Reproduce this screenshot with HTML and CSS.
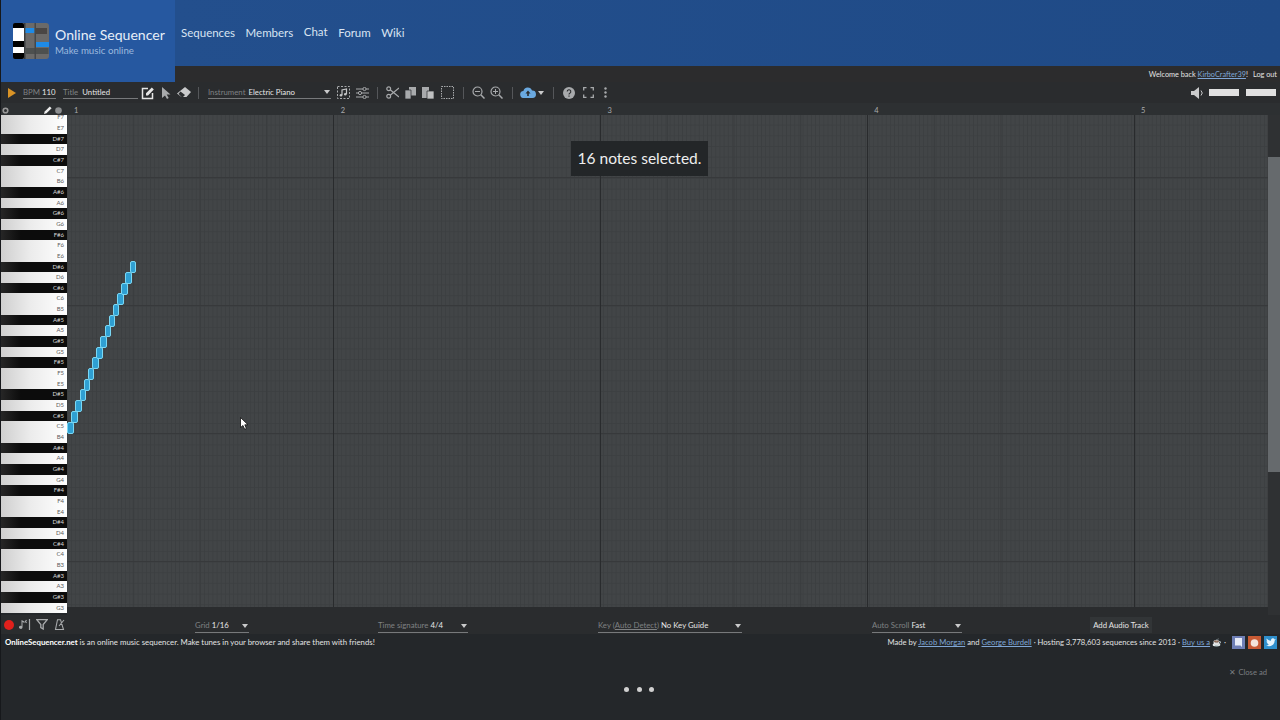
FILE: index.html
```html
<!DOCTYPE html>
<html lang="en">
<head>
  <meta charset="UTF-8"/>
  <title>Online Sequencer</title>
  <link rel="stylesheet" href="styles.css">
</head>
<body>

  <header class="top">
    <a class="brand">
      <svg class="logo" width="36" height="36" viewBox="0 0 36 36">
        <rect width="36" height="36" rx="3" fill="#6b6a69"/>
        <rect width="11" height="36" rx="2" fill="#000"/>
        <rect y="5" width="11" height="13" fill="#fff"/>
        <rect y="24" width="11" height="6" fill="#fff"/>
        <rect x="11" width="1.5" height="36" fill="#3a3d3f"/>
        <rect x="12.5" y="5" width="9" height="5" fill="#1f8be6"/>
        <rect x="23" y="19" width="13" height="5" fill="#1f8be6"/>
        <rect x="23" y="5" width="11" height="6" fill="#4a4644"/>
        <rect x="12.5" y="25" width="23" height="6" fill="#4d504f"/>
        <rect x="21.5" width="1.5" height="36" fill="#454749"/>
      </svg>
      <div>
        <div class="brand-name">Online Sequencer</div>
        <div class="brand-sub">Make music online</div>
      </div>
    </a>
    <div class="top-right">
      <nav class="nav">
        <a>Sequences</a>
        <a>Members</a>
        <a class="nav-chat">Chat</a>
        <a>Forum</a>
        <a>Wiki</a>
      </nav>
      <div class="userbar">
        <span>Welcome back <a class="link">KirboCrafter39</a>!</span>
        <span class="logout">Log out</span>
      </div>
    </div>
  </header>

  <div class="toolbar">
    <svg class="play" width="9" height="10" viewBox="0 0 9 10"><path d="M1 0l8 5-8 5z" fill="#d99326"/></svg>
    <div class="field field-bpm"><label>BPM</label> <b>110</b></div>
    <div class="field field-title"><label>Title</label> <b>Untitled</b></div>
    <svg class="ico ico-edit" width="14" height="14" viewBox="0 0 14 14"><path d="M7 2.500H1.500v10h10V7" fill="none" stroke="#e6e6e6" stroke-width="1.500"/><path d="M5 9.500V7.300L10.800 1.500l2 2L7 9.500z" fill="#e6e6e6"/></svg>
    <svg class="ico ico-pointer" width="10" height="12" viewBox="0 0 10 12"><path d="M1 0v11l3-2.600 2 3.600 1.700-.9-2-3.500H9.500z" fill="#a8aaac"/></svg>
    <svg class="ico ico-eraser" width="14" height="11" viewBox="0 0 14 11"><path d="M8 0l6 5-4.500 5H4.500L0 6.500z" fill="#c9cacb"/><path d="M3.500 4.500L8 8 6 10H4.500L1.500 6.800z" fill="#2a2c2e"/></svg>
    <span class="sep sep-1"></span>
    <div class="field field-instrument"><label>Instrument</label> <b>Electric Piano</b><i class="caret"></i></div>
    <svg class="ico ico-note" width="13" height="13" viewBox="0 0 13 13"><rect x=".5" y=".5" width="12" height="12" fill="none" stroke="#a8aaac" stroke-dasharray="2 1.500"/><path d="M5 9V4l4.500-1v5" fill="none" stroke="#c4c5c6" stroke-width="1.200"/><circle cx="4" cy="9.300" r="1.300" fill="#c4c5c6"/><circle cx="8.300" cy="8.300" r="1.300" fill="#c4c5c6"/></svg>
    <svg class="ico ico-sliders" width="13" height="12" viewBox="0 0 13 12"><path d="M0 2h13M0 6h13M0 10h13" stroke="#a8aaac" stroke-width="1.100"/><circle cx="8.500" cy="2" r="1.600" fill="#2a2c2e" stroke="#a8aaac"/><circle cx="4" cy="6" r="1.600" fill="#2a2c2e" stroke="#a8aaac"/><circle cx="8.500" cy="10" r="1.600" fill="#2a2c2e" stroke="#a8aaac"/></svg>
    <span class="sep sep-2"></span>
    <svg class="ico ico-cut" width="13" height="13" viewBox="0 0 13 13"><circle cx="2.700" cy="2.700" r="1.900" fill="none" stroke="#a8aaac" stroke-width="1.200"/><circle cx="2.700" cy="10.300" r="1.900" fill="none" stroke="#a8aaac" stroke-width="1.200"/><path d="M4.200 3.800L13 11M4.200 9.200L13 2" stroke="#a8aaac" stroke-width="1.200"/></svg>
    <svg class="ico ico-copy" width="11" height="12" viewBox="0 0 11 12"><path d="M4 0h7v8.500H4z" fill="#a8aaac"/><path d="M0 3h6v9H0z" fill="#a8aaac" stroke="#2a2c2e" stroke-width=".7"/></svg>
    <svg class="ico ico-paste" width="12" height="12" viewBox="0 0 12 12"><path d="M0 0h7v11H0z" fill="#a8aaac"/><path d="M5 4h7v8H5z" fill="#bfc0c1" stroke="#2a2c2e" stroke-width=".7"/></svg>
    <svg class="ico ico-select" width="13" height="13" viewBox="0 0 13 13"><rect x=".5" y=".5" width="12" height="12" fill="none" stroke="#a8aaac" stroke-dasharray="1.500 1"/></svg>
    <span class="sep sep-3"></span>
    <svg class="ico ico-zoomout" width="13" height="13" viewBox="0 0 13 13"><circle cx="5.500" cy="5.500" r="4.500" fill="none" stroke="#a8aaac" stroke-width="1.200"/><path d="M8.800 8.800L12.500 12.500" stroke="#a8aaac" stroke-width="1.500"/><path d="M3 5.500h5" stroke="#a8aaac"/></svg>
    <svg class="ico ico-zoomin" width="13" height="13" viewBox="0 0 13 13"><circle cx="5.500" cy="5.500" r="4.500" fill="none" stroke="#a8aaac" stroke-width="1.200"/><path d="M8.800 8.800L12.500 12.500" stroke="#a8aaac" stroke-width="1.500"/><path d="M3 5.500h5M5.500 3v5" stroke="#a8aaac"/></svg>
    <span class="sep sep-4"></span>
    <svg class="ico ico-cloud" width="16" height="11" viewBox="0 0 16 11"><path d="M4 11a3.500 3.500 0 0 1-.6-7A4.500 4.500 0 0 1 12 3.600 3.700 3.700 0 0 1 12.500 11z" fill="#6aa9e0"/><path d="M8 3.500L5.500 6.500H7.200V9h1.600V6.500h1.700z" fill="#2a2c2e"/></svg>
    <i class="caret caret-cloud"></i>
    <span class="sep sep-5"></span>
    <svg class="ico ico-help" width="12" height="12" viewBox="0 0 12 12"><circle cx="6" cy="6" r="6" fill="#a8aaac"/><path d="M4.200 4.600a1.800 1.800 0 1 1 2.600 1.600c-.6.300-.8.600-.8 1.200M6 8.500v1.200" fill="none" stroke="#2a2c2e" stroke-width="1.100"/></svg>
    <svg class="ico ico-full" width="11" height="11" viewBox="0 0 11 11"><path d="M.7 3.500V.7h2.800M7.500.7h2.800v2.800M10.300 7.500v2.800H7.500M3.500 10.300H.7V7.500" fill="none" stroke="#a8aaac" stroke-width="1.300"/></svg>
    <svg class="ico ico-more" width="3" height="11" viewBox="0 0 3 11"><circle cx="1.500" cy="1.500" r="1.200" fill="#a8aaac"/><circle cx="1.500" cy="5.500" r="1.200" fill="#a8aaac"/><circle cx="1.500" cy="9.500" r="1.200" fill="#a8aaac"/></svg>
    <div class="volume">
      <svg width="14" height="12" viewBox="0 0 14 12"><path d="M0 4h3l5-4v12L3 8H0z" fill="#c9cacb"/><path d="M10 3.500a3.500 3.500 0 0 1 0 5" fill="none" stroke="#c9cacb"/></svg>
      <span class="slider"></span>
      <span class="slider"></span>
    </div>
  </div>

  <div class="ruler">
    <div class="ruler-tools">
      <svg width="7" height="7" viewBox="0 0 7 7"><circle cx="3.500" cy="3.500" r="2.300" fill="none" stroke="#999" stroke-width="1.600"/></svg>
      <svg class="pencil" width="8" height="8" viewBox="0 0 8 8"><path d="M0 8l.7-2.500L5.800.4l1.800 1.800L2.500 7.300z" fill="#eee"/></svg>
      <svg class="round" width="7" height="7" viewBox="0 0 7 7"><circle cx="3.500" cy="3.500" r="3.300" fill="#8c8e90"/></svg>
    </div>
    <div class="bars">
      <span>1</span><span>2</span><span>3</span><span>4</span><span>5</span>
    </div>
  </div>

  <main class="editor">
    <div class="piano"><div class="keys" id="keys"></div></div>
    <div class="grid-wrap">
      <div class="grid" id="grid">
        <div class="toast">16 notes selected.</div>
        <svg class="cursor" width="9" height="13" viewBox="0 0 9 13"><path d="M.5.500v10l2.500-2 1.700 3.800 1.700-.8L4.800 7.800H8z" fill="#fff" stroke="#111" stroke-width=".8"/></svg>
      </div>
      <div class="scroll-x"></div>
    </div>
    <div class="scroll-y"><div class="thumb"></div></div>
  </main>

  <div class="bottombar">
    <span class="rec"></span>
    <svg class="ico ico-split" width="13" height="11" viewBox="0 0 13 11"><path d="M3.500 8V1l3 1.500v1.500l-2-1v5.500a1.800 1.500 0 1 1-1-1.500z" fill="#a8aaac"/><path d="M8.500 1l-1 1.500 1 1.500M11.500 0v11" fill="none" stroke="#a8aaac" stroke-width="1.200"/></svg>
    <svg class="ico ico-filter" width="12" height="11" viewBox="0 0 12 11"><path d="M.8.700h10.400L7.200 5.500V10L4.800 8.600V5.500z" fill="none" stroke="#a8aaac" stroke-width="1.300"/></svg>
    <svg class="ico ico-metro" width="11" height="11" viewBox="0 0 11 11"><path d="M3.500.700h3L9.500 10.500h-8zM5 7l5-6" fill="none" stroke="#a8aaac" stroke-width="1.100"/></svg>
    <div class="field field-grid"><label>Grid</label> <b>1/16</b><i class="caret"></i></div>
    <div class="field field-time"><label>Time signature</label> <b>4/4</b><i class="caret"></i></div>
    <div class="field field-key"><label>Key (<u>Auto Detect</u>)</label> <b>No Key Guide</b><i class="caret"></i></div>
    <div class="field field-scroll"><label>Auto Scroll</label> <b>Fast</b><i class="caret"></i></div>
    <button class="add-track">Add Audio Track</button>
  </div>

  <footer class="footer">
    <div class="footer-line">
      <p class="about"><strong>OnlineSequencer.net</strong> is an online music sequencer. Make tunes in your browser and share them with friends!</p>
      <p class="credits">Made by <a class="link">Jacob Morgan</a> and <a class="link">George Burdell</a> · Hosting 3,778,603 sequences since 2013 · <a class="link">Buy us a</a> ☕ ·</p>
      <div class="social">
        <span class="discord"><svg width="9" height="9" viewBox="0 0 9 9"><path d="M1 0h7v9L6.500 7.500H1z" fill="#e8ecf8"/></svg></span>
        <span class="reddit"><svg width="9" height="9" viewBox="0 0 9 9"><circle cx="4.500" cy="5" r="3.800" fill="#f4e4da"/></svg></span>
        <span class="twitter"><svg width="10" height="9" viewBox="0 0 10 9"><path d="M0 7.500c4 2 8.500 0 8.700-5L10 1.300 8.700 1.500C8 0 6 0 5.200 1.300 5 2 5 2.500 5 2.800 3 2.800 1.500 1.800.7.600c-.5 1 0 2.300.7 2.800L.5 3.200c0 1 .7 1.800 1.600 2H1.300c.3.800 1 1.200 1.800 1.300C2.300 7.200 1 7.600 0 7.500z" fill="#e6f4fc"/></svg></span>
      </div>
    </div>
    <div class="close-ad">✕ Close ad</div>
    <div class="dots"><span></span><span></span><span></span></div>
  </footer>

  <script src="script.js"></script>
</body>
</html>
```

FILE: styles.css
```css
* {
  margin: 0; padding: 0;
  box-sizing: border-box;
}

body {
  width: 1280px;
  height: 720px;
  overflow: hidden;
  background: #24272a;
  color: #d8d8d8;
  font-family: 'Lato', 'Open Sans', sans-serif;
  border-left: 1px solid #16181b;
}

.link {
  color: #7fa6d6;
  text-decoration: underline;
}

/* Top header */
.top {
  display: flex;
  height: 82px;
}

.brand {
  width: 174px;
  display: flex;
  align-items: flex-start;
  gap: 6px;
  padding: 23px 0 0 12px;
  background: #2658a0;
}

.brand-name {
  font-size: 14.1px;
  line-height: 18px;
  margin-top: 3px;
  color: #e6eef8;
  white-space: nowrap;
}

.brand-sub {
  font-size: 9.7px;
  line-height: 13px;
  color: #9db9de;
}

.top-right {
  flex: 1;
  display: flex;
  flex-direction: column;
}

.nav {
  height: 66px;
  display: flex;
  gap: 10.5px;
  padding: 25px 0 0 6px;
  background: linear-gradient(to right, #234f8d, #1f4a86);
  font-size: 11.5px;
  line-height: 16px;
  color: #d9e4f2;
}

.nav-chat {
  margin-top: -1px;
}

.userbar {
  height: 16px;
  display: flex;
  justify-content: flex-end;
  align-items: center;
  gap: 5px;
  padding-right: 3px;
  background: #2c2c2d;
  font-size: 7.3px;
  color: #e4e4e4;
}

/* Main toolbar */
.toolbar {
  height: 21px;
  display: flex;
  align-items: center;
  background: #2a2c2e;
  font-size: 7.8px;
}

.field {
  position: relative;
  height: 13px;
  line-height: 12px;
  border-bottom: 1px solid #77797b;
  white-space: nowrap;
}

.field label {
  color: #7f8183;
}

.field b {
  font-weight: 400;
  color: #e6e6e6;
}

.field-title b {
  margin-left: 2px;
}

.field-instrument b {
  margin-left: 1px;
}

.caret {
  display: inline-block;
  width: 0;
  height: 0;
  border-left: 3.5px solid transparent;
  border-right: 3.5px solid transparent;
  border-top: 4px solid #c9cacb;
}

.field .caret {
  position: absolute;
  right: 1px;
  top: 4px;
}

.sep {
  width: 1px;
  height: 12px;
  background: #55575a;
}

.ico {
  flex: none;
}

.play { margin-left: 6px; }
.field-bpm { width: 33px; margin-left: 7px; }
.field-title { width: 75px; margin-left: 7px; }
.ico-edit { margin-left: 3px; }
.ico-pointer { margin-left: 6px; }
.ico-eraser { margin-left: 6px; }
.sep-1 { margin-left: 7px; }
.field-instrument { width: 123px; margin-left: 9px; }
.ico-note { margin-left: 6px; }
.ico-sliders { margin-left: 6px; }
.sep-2 { margin-left: 8px; }
.ico-cut { margin-left: 8px; }
.ico-copy { margin-left: 6px; }
.ico-paste { margin-left: 6px; }
.ico-select { margin-left: 7px; }
.sep-3 { margin-left: 9px; }
.ico-zoomout { margin-left: 8px; }
.ico-zoomin { margin-left: 5px; }
.sep-4 { margin-left: 9px; }
.ico-cloud { margin-left: 7px; }
.caret-cloud { margin-left: 2px; }
.sep-5 { margin-left: 9px; }
.ico-help { margin-left: 9px; }
.ico-full { margin-left: 8px; }
.ico-more { margin-left: 10px; }

.volume {
  margin-left: auto;
  margin-right: 4px;
  display: flex;
  align-items: center;
  gap: 7px;
}

.volume svg {
  margin-right: -3px;
}

.slider {
  width: 30px;
  height: 7px;
  background: #e0e0e0;
}

/* Bar numbers */
.ruler {
  height: 12px;
  display: flex;
  background: #2d3032;
  font-size: 7.5px;
  line-height: 15px;
  color: #a9abad;
}

.ruler-tools {
  width: 66px;
  flex: none;
  display: flex;
  align-items: center;
  padding: 2px 5px 0 1px;
}

.pencil {
  margin-left: auto;
  margin-right: 3px;
}

.bars {
  display: flex;
  flex: 1;
  min-width: 0;
  overflow: hidden;
}

.bars span {
  flex: none;
  width: 266.75px;
  padding-left: 7px;
}

/* Piano roll */
.editor {
  height: 500px;
  display: flex;
}

.piano {
  width: 66px;
  overflow: hidden;
  flex: none;
}

.keys {
  margin-top: -2.7px;
}

.key {
  height: 10.67px;
  line-height: 10.67px;
  padding-right: 3px;
  text-align: right;
  font-size: 6px;
  color: #5d5d5d;
  background: linear-gradient(to right, #cfcfcf, #ececec 45%, #fff);
}

.key.sharp {
  color: #d8d8d8;
  background: linear-gradient(to right, #262626, #0c0c0c 30%, #0c0c0c);
}

.grid-wrap {
  flex: 1;
  min-width: 0;
}

.grid {
  position: relative;
  height: 492px;
  overflow: hidden;
  background-color: #424547;
  background-image:
    linear-gradient(to right, #292b2d 1px, transparent 1px),
    linear-gradient(to bottom, #37393b 1px, transparent 1px),
    linear-gradient(to right, #393c3e 1px, transparent 1px),
    linear-gradient(to right, #3c3f41 1px, transparent 1px),
    linear-gradient(to bottom, #3d4042 1px, transparent 1px);
  background-size: 267px 100%, 100% 128px, 66.75px 100%, 4.17px 100%, 100% 10.67px;
  background-position: -1px 0, 0 62px, -1px 0, 0 0, 0 -1px;
}

.scroll-x {
  height: 8px;
  background: #2a2c2e;
}

.scroll-y {
  width: 12px;
  flex: none;
  padding-top: 42px;
  background: #2f3133;
}

.thumb {
  height: 315px;
  background: #666a6d;
}

.note {
  position: absolute;
  width: 6.5px;
  height: 12px;
  background: #2f9fd2;
  border: 1px solid #7ad8f5;
  border-radius: 2px;
}

.toast {
  position: absolute;
  left: 504px;
  top: 26px;
  width: 137px;
  height: 35px;
  background: #232628;
  color: #eee;
  font-size: 15.5px;
  line-height: 35px;
  text-align: center;
}

.cursor {
  position: absolute;
  left: 173px;
  top: 302px;
}

/* Bottom toolbar */
.bottombar {
  height: 19px;
  display: flex;
  align-items: center;
  background: #2a2c2e;
  font-size: 7.8px;
}

.bottombar .field {
  height: 14px;
  margin-top: 2px;
  line-height: 13px;
}

.bottombar .caret {
  top: 5px;
}

.rec {
  width: 10px;
  height: 10px;
  margin-left: 3px;
  border-radius: 50%;
  background: #e0201c;
}

.ico-split { margin-left: 4px; }
.ico-filter { margin-left: 5px; }
.ico-metro { margin-left: 6px; }
.field-grid { width: 54px; margin-left: 130px; }
.field-time { width: 90px; margin-left: 129px; }
.field-key { width: 144px; margin-left: 130px; }
.field-scroll { width: 90px; margin-left: 130px; }

.add-track {
  width: 62px;
  height: 16px;
  margin-left: 128px;
  border: none;
  background: #323537;
  color: #e4e4e4;
  font: inherit;
}

/* Footer */
.footer {
  position: relative;
  flex: 1;
  font-size: 7.65px;
}

.footer-line {
  height: 17px;
  display: flex;
  align-items: center;
  padding: 0 3px 0 4px;
  color: #e2e2e2;
}

.footer-line p {
  margin-top: -1px;
}

.about {
  font-size: 7.8px;
}

.footer-line strong {
  color: #fff;
}

.credits {
  margin-left: auto;
}

.social {
  display: flex;
  gap: 3px;
  margin-left: 6px;
}

.social span {
  width: 13px;
  height: 13px;
  display: flex;
  align-items: center;
  justify-content: center;
}

.discord { background: #6f7fb6; }
.reddit { background: #c85a34; }
.twitter { background: #2f8fcc; }

.close-ad {
  text-align: right;
  padding: 16px 13px 0 0;
  color: #7a7d80;
}

.dots {
  display: flex;
  justify-content: center;
  gap: 7.5px;
  margin: 10px 0 0 -3px;
}

.dots span {
  width: 5px;
  height: 5px;
  border-radius: 50%;
  background: #d0d0d0;
}
```

FILE: script.js
```js
const names = ['C', 'C#', 'D', 'D#', 'E', 'F', 'F#', 'G', 'G#', 'A', 'A#', 'B'];
const keys = document.getElementById('keys');
const grid = document.getElementById('grid');

// F7 at the top of the roll down to G3
for (let n = 7 * 12 + 5; n >= 3 * 12 + 7; n--) {
  const name = names[n % 12];
  const key = document.createElement('div');
  key.className = name.includes('#') ? 'key sharp' : 'key';
  key.textContent = name + Math.floor(n / 12);
  keys.appendChild(key);
}

// the 16 selected notes, one sixteenth and one semitone apart
for (let i = 0; i < 16; i++) {
  const note = document.createElement('div');
  note.className = 'note';
  note.style.left = i * 4.17 + 'px';
  note.style.top = 306.5 - i * 10.67 + 'px';
  grid.appendChild(note);
}
```
